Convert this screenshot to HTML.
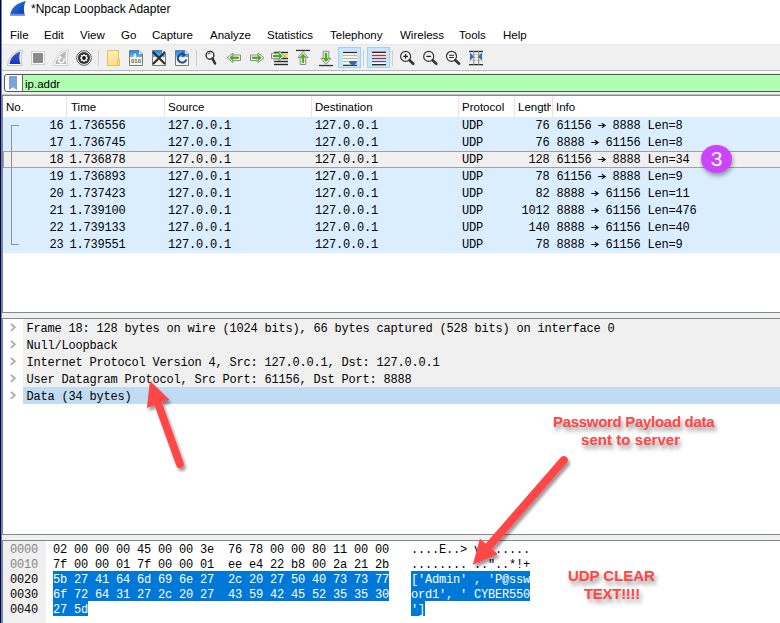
<!DOCTYPE html>
<html><head><meta charset="utf-8"><style>
*{margin:0;padding:0;box-sizing:border-box}
html,body{width:780px;height:623px;overflow:hidden;background:#fff}
body{position:relative;font-family:"Liberation Sans",sans-serif;font-size:12px;color:#000}
.a{position:absolute}
.ui{position:absolute;font-family:"Liberation Sans",sans-serif;font-size:11.5px;line-height:14px;white-space:pre}
.ti{font-size:12px}
.m{position:absolute;font-family:"Liberation Mono",monospace;font-size:12px;letter-spacing:-0.2px;line-height:17px;white-space:pre}
.mh{position:absolute;font-family:"Liberation Mono",monospace;font-size:12px;letter-spacing:-0.2px;line-height:15px;white-space:pre}
.ar{display:inline-block;width:7px;height:17px;vertical-align:top;letter-spacing:0}.ar svg{display:block;overflow:visible}
.note{position:absolute;font-family:"Liberation Sans",sans-serif;font-weight:bold;font-size:15px;letter-spacing:-0.3px;line-height:17px;color:#ff4646;white-space:pre;text-shadow:2px 4px 4px rgba(0,0,0,.42)}
</style></head><body>
<div class="a" style="left:0px;top:0px;width:1px;height:623px;background:#000;"></div>
<div class="a" style="left:1px;top:0px;width:1px;height:623px;background:#3d8ef2;"></div>
<svg class="a" style="left:0;top:0" width="30" height="20" viewBox="0 0 30 20"><defs><linearGradient id="tfin" x1="0" y1="0" x2="1" y2="1"><stop offset="0" stop-color="#2f7fee"/><stop offset="1" stop-color="#0636a8"/></linearGradient><linearGradient id="tfb" x1="0" y1="0" x2="0" y2="1"><stop offset="0" stop-color="#7aa8f0"/><stop offset="1" stop-color="#8090b0"/></linearGradient></defs><path d="M10 15.5 C11 8.5 16 3 25.8 1 C23.6 5 23.3 10 24.8 15.5 Z" fill="url(#tfin)"/><path d="M10.2 13.8 H24.6 L24.9 15.6 H10 Z" fill="url(#tfb)" opacity="0.85"/></svg>
<div class="ui ti" style="left:31px;top:2px">*Npcap Loopback Adapter</div>
<div class="ui" style="left:10px;top:28px;">File</div>
<div class="ui" style="left:44px;top:28px;">Edit</div>
<div class="ui" style="left:80px;top:28px;">View</div>
<div class="ui" style="left:121px;top:28px;">Go</div>
<div class="ui" style="left:152px;top:28px;">Capture</div>
<div class="ui" style="left:210px;top:28px;">Analyze</div>
<div class="ui" style="left:267px;top:28px;">Statistics</div>
<div class="ui" style="left:330px;top:28px;">Telephony</div>
<div class="ui" style="left:400px;top:28px;">Wireless</div>
<div class="ui" style="left:459px;top:28px;">Tools</div>
<div class="ui" style="left:503px;top:28px;">Help</div>
<div class="a" style="left:2px;top:44px;width:778px;height:1px;background:#e9e9e9;"></div>
<div class="a" style="left:2px;top:45px;width:778px;height:25px;background:#f0f0f0;"></div>
<div class="a" style="left:2px;top:70px;width:778px;height:1px;background:#b9b9b9;"></div>
<svg class="a" style="left:0;top:0" width="500" height="72" viewBox="0 0 500 72"><defs><linearGradient id="gfin" x1="0" y1="0" x2="0" y2="1"><stop offset="0" stop-color="#3a5ad8"/><stop offset="1" stop-color="#1c36b0"/></linearGradient><linearGradient id="gsky" x1="0" y1="0" x2="0" y2="1"><stop offset="0" stop-color="#1e8fe6"/><stop offset="1" stop-color="#5ab8f2"/></linearGradient><linearGradient id="gfold" x1="0" y1="0" x2="0" y2="1"><stop offset="0" stop-color="#fdedb5"/><stop offset="1" stop-color="#fbe08e"/></linearGradient></defs><path d="M7.5 65.5 C8.5 57 14 51 22.5 50 C21 55 21 60 22 65.5 Z" fill="#fff" stroke="#c4c4c4" stroke-width="1"/><path d="M9.5 64 C10.5 57.5 14.5 53 20.5 51.5 C19 55.5 19 59.5 20.5 64 Z" fill="url(#gfin)"/><rect x="31.5" y="51.5" width="13" height="13" fill="#fff" stroke="#cfcfcf"/><rect x="33" y="53" width="10" height="10" fill="#8a8a8a"/><path d="M53.5 65.5 C54.5 57 60 51 68.5 50 C67 55 67 60 68 65.5 Z" fill="#fff" stroke="#cfcfcf" stroke-width="1"/><path d="M55.5 64 C56.5 57.5 60.5 53 66.5 51.5 C65 55.5 65 59.5 66.5 64 Z" fill="#b8b8b8"/><path d="M63.6 58.6 A2.7 2.7 0 1 1 60.2 57.6" fill="none" stroke="#fff" stroke-width="1.6"/><path d="M59.2 55.6 L62.6 57.4 L59.6 59.6 Z" fill="#fff"/><circle cx="84" cy="58" r="7.3" fill="#fff" stroke="#5a5a5a" stroke-width="1"/><circle cx="84" cy="58" r="6.0" fill="#333"/><rect x="83.25" y="54.1" width="1.5" height="1.6" fill="#fff" transform="rotate(0 84 58)"/><rect x="83.25" y="54.1" width="1.5" height="1.6" fill="#fff" transform="rotate(45 84 58)"/><rect x="83.25" y="54.1" width="1.5" height="1.6" fill="#fff" transform="rotate(90 84 58)"/><rect x="83.25" y="54.1" width="1.5" height="1.6" fill="#fff" transform="rotate(135 84 58)"/><rect x="83.25" y="54.1" width="1.5" height="1.6" fill="#fff" transform="rotate(180 84 58)"/><rect x="83.25" y="54.1" width="1.5" height="1.6" fill="#fff" transform="rotate(225 84 58)"/><rect x="83.25" y="54.1" width="1.5" height="1.6" fill="#fff" transform="rotate(270 84 58)"/><rect x="83.25" y="54.1" width="1.5" height="1.6" fill="#fff" transform="rotate(315 84 58)"/><circle cx="84" cy="58" r="2.9" fill="#fff"/><circle cx="84" cy="58" r="1.9" fill="#111"/><rect x="98" y="50" width="1" height="16" fill="#cfcfcf"/><rect x="196" y="50" width="1" height="16" fill="#cfcfcf"/><rect x="363" y="50" width="1" height="16" fill="#cfcfcf"/><rect x="392" y="50" width="1" height="16" fill="#cfcfcf"/><path d="M107.5 50.5 H118.5 V59.5 H119.5 V65.5 H107.5 Z" fill="url(#gfold)" stroke="#e8c24e"/><path d="M117.5 59.5 H119.5 M117.5 59.5 V65.5" stroke="#e8c24e"/><path d="M129.5 50.5 H139 L142.5 54 V65.5 H129.5 Z" fill="#f6f4e0" stroke="#7a7a7a"/><path d="M130 51 H139 L142 54 V57 H130 Z" fill="url(#gsky)"/><path d="M139 51 V54 H142 Z" fill="#fff"/><path d="M133 57 C133.5 55 134.5 53.5 136 53 C135.5 54.5 135.5 56 136 57 Z" fill="#fff"/><text x="131" y="62.9" font-family="Liberation Sans" font-size="5.2" font-weight="bold" fill="#6a6a6a" textLength="10" lengthAdjust="spacingAndGlyphs">010</text><path d="M152.5 50.5 H162 L165.5 54 V65.5 H152.5 Z" fill="#f6f4e0" stroke="#7a7a7a"/><path d="M153 51 H162 L165 54 V57 H153 Z" fill="url(#gsky)"/><path d="M162 51 V54 H165 Z" fill="#fff"/><path d="M153.5 52.5 L164.5 63.5 M164.5 52.5 L153.5 63.5" stroke="#2b2b2b" stroke-width="2.1" stroke-linecap="round"/><path d="M175.5 50.5 H185 L188.5 54 V65.5 H175.5 Z" fill="#f6f4e0" stroke="#7a7a7a"/><path d="M176 51 H185 L188 54 V57 H176 Z" fill="url(#gsky)"/><path d="M185 51 V54 H188 Z" fill="#fff"/><path d="M186.3 59.5 A4.3 4.3 0 1 1 183.5 54.2" fill="none" stroke="#1d4a9c" stroke-width="2"/><path d="M182 51.5 L186.5 54.5 L182.5 57.5 Z" fill="#1d4a9c"/><circle cx="210" cy="55.3" r="3.9" fill="#f4f4f4" stroke="#333" stroke-width="1.4"/><path d="M208 54.5 A2.2 2.2 0 0 1 210.5 53" fill="none" stroke="#333" stroke-width="0.9"/><path d="M212.5 58.5 L215 63.5" stroke="#333" stroke-width="2.6" stroke-linecap="round"/><path d="M227 57.8 L233 53.0 L233 55.0 L240.5 55.0 L240.5 60.599999999999994 L233 60.599999999999994 L233 62.599999999999994 Z" fill="#fff" stroke="#8a8a8a" stroke-width="1" stroke-linejoin="round"/><path d="M229.6 57.8 L232.8 54.9 L232.8 56.9 L238.8 56.9 L238.8 58.699999999999996 L232.8 58.699999999999996 L232.8 60.699999999999996 Z" fill="#4aaa12" stroke="#4aaa12" stroke-width="0.7" stroke-linejoin="round"/><path d="M264 57.8 L258 53.0 L258 55.0 L250.5 55.0 L250.5 60.599999999999994 L258 60.599999999999994 L258 62.599999999999994 Z" fill="#fff" stroke="#8a8a8a" stroke-width="1" stroke-linejoin="round"/><path d="M261.4 57.8 L258.2 54.9 L258.2 56.9 L252.2 56.9 L252.2 58.699999999999996 L258.2 58.699999999999996 L258.2 60.699999999999996 Z" fill="#4aaa12" stroke="#4aaa12" stroke-width="0.7" stroke-linejoin="round"/><rect x="274" y="51.8" width="14" height="1.4" fill="#2a2a2a"/><rect x="274" y="57.8" width="14" height="1.4" fill="#2a2a2a"/><rect x="274" y="60.8" width="14" height="1.4" fill="#2a2a2a"/><rect x="274" y="63.8" width="14" height="1.4" fill="#2a2a2a"/><rect x="285" y="53.5" width="3" height="3.5" fill="#f8e030"/><path d="M285 56 L279 51.2 L279 53.2 L271.5 53.2 L271.5 58.8 L279 58.8 L279 60.8 Z" fill="#fff" stroke="#8a8a8a" stroke-width="1" stroke-linejoin="round"/><path d="M282.4 56 L279.2 53.1 L279.2 55.1 L273.2 55.1 L273.2 56.9 L279.2 56.9 L279.2 58.9 Z" fill="#4aaa12" stroke="#4aaa12" stroke-width="0.7" stroke-linejoin="round"/><rect x="296" y="49.8" width="14" height="1.3" fill="#333"/><path d="M303 51.5 L308 57.5 L305.8 57.5 L305.8 64.5 L300.2 64.5 L300.2 57.5 L298 57.5 Z" fill="#fff" stroke="#8a8a8a" stroke-width="1" stroke-linejoin="round"/><path d="M303 54.1 L305.9 57.3 L303.9 57.3 L303.9 62.8 L302.1 62.8 L302.1 57.3 L300.1 57.3 Z" fill="#4aaa12" stroke="#4aaa12" stroke-width="0.7" stroke-linejoin="round"/><rect x="319" y="64.9" width="14" height="1.3" fill="#333"/><path d="M326 64.3 L331 58.3 L328.8 58.3 L328.8 51.3 L323.2 51.3 L323.2 58.3 L321 58.3 Z" fill="#fff" stroke="#8a8a8a" stroke-width="1" stroke-linejoin="round"/><path d="M326 61.699999999999996 L328.9 58.5 L326.9 58.5 L326.9 53.0 L325.1 53.0 L325.1 58.5 L323.1 58.5 Z" fill="#4aaa12" stroke="#4aaa12" stroke-width="0.7" stroke-linejoin="round"/><rect x="338.5" y="47.5" width="22" height="20" fill="#cce4f7" stroke="#99d1ff"/><rect x="343" y="52" width="14" height="14" fill="#fbfbf5"/><rect x="343" y="51.9" width="14" height="1.2" fill="#2a2a2a"/><rect x="343" y="54.9" width="14" height="1.2" fill="#b8b6a8"/><rect x="343" y="57.9" width="14" height="1.2" fill="#b8b6a8"/><rect x="343" y="60.9" width="14" height="1.2" fill="#b8b6a8"/><rect x="343" y="64.7" width="14" height="1.2" fill="#2a2a2a"/><path d="M349 61 H357 C357 63.5 355 65 353 65 C351 65 349 63.5 349 61 Z" fill="#3565b5"/><rect x="367.5" y="47.5" width="22" height="20" fill="#cce4f7" stroke="#99d1ff"/><rect x="372" y="51.5" width="14" height="14" fill="#fcfcf6"/><rect x="372" y="51.599999999999994" width="14" height="1.4" fill="#2a2a2a"/><rect x="372" y="54.8" width="14" height="1.4" fill="#e02222"/><rect x="372" y="57.8" width="14" height="1.4" fill="#2a55a5"/><rect x="372" y="60.8" width="14" height="1.4" fill="#704a88"/><rect x="372" y="64.0" width="14" height="1.4" fill="#2a2a2a"/><circle cx="405.6" cy="56.4" r="5" fill="#f6f6f6" stroke="#333" stroke-width="1.2"/><path d="M409.5 60.3 L413.20000000000005 63.8" stroke="#333" stroke-width="2.6" stroke-linecap="round"/><path d="M403.2 56.4 H408 M405.6 54 V58.8" stroke="#222" stroke-width="1.3"/><circle cx="428.7" cy="56.4" r="5" fill="#f6f6f6" stroke="#333" stroke-width="1.2"/><path d="M432.59999999999997 60.3 L436.3 63.8" stroke="#333" stroke-width="2.6" stroke-linecap="round"/><path d="M426.3 56.4 H431.1" stroke="#222" stroke-width="1.3"/><circle cx="451.5" cy="56.3" r="5" fill="#f6f6f6" stroke="#333" stroke-width="1.2"/><path d="M455.4 60.199999999999996 L459.1 63.699999999999996" stroke="#333" stroke-width="2.6" stroke-linecap="round"/><path d="M449.1 55.2 H453.9 M449.1 57.5 H453.9" stroke="#222" stroke-width="1.1"/><rect x="469" y="54.0" width="14" height="1" fill="#cfcfc0"/><rect x="469" y="57.0" width="14" height="1" fill="#cfcfc0"/><rect x="469" y="60.0" width="14" height="1" fill="#cfcfc0"/><rect x="469" y="50.8" width="14" height="1.3" fill="#2a2a2a"/><rect x="469" y="64" width="14" height="1.3" fill="#2a2a2a"/><rect x="473.3" y="51" width="1" height="14" fill="#888"/><rect x="478.2" y="51" width="1" height="14" fill="#888"/><path d="M470 52.5 L474 56.8 L470 60.5 Z" fill="#3570c0"/><path d="M482 52.5 L478 56.8 L482 60.5 Z" fill="#3570c0"/></svg>
<div class="a" style="left:2px;top:71px;width:778px;height:24px;background:#f0f0f0;"></div>
<div class="a" style="left:2px;top:71px;width:778px;height:2px;background:#fbfbfb;"></div>
<div class="a" style="left:2px;top:94px;width:778px;height:1px;background:#c4c4c4;"></div>
<div class="a" style="left:2px;top:95px;width:778px;height:1px;background:#828790;"></div>
<div class="a" style="left:4px;top:74px;width:800px;height:18px;background:#fff;border:1px solid #555;border-radius:3px"></div>
<div class="a" style="left:22px;top:75px;width:780px;height:16px;background:#afffaf;border-left:1px solid #666"></div>
<div class="ui" style="left:25px;top:77px;">ip.addr</div>
<svg class="a" style="left:8px;top:75px" width="11" height="16" viewBox="0 0 11 16"><path d="M1 1 H9 V15 L5 12.3 L1 15 Z" fill="#7aa4d6"/></svg>
<div class="a" style="left:2px;top:96px;width:1px;height:217px;background:#828790;"></div>
<div class="a" style="left:3px;top:96px;width:777px;height:21px;background:#fff;"></div>
<div class="ui" style="left:6px;top:100px;">No.</div>
<div class="a" style="left:66px;top:96px;width:1px;height:21px;background:#e5e5e5;"></div>
<div class="ui" style="left:71px;top:100px;">Time</div>
<div class="a" style="left:164px;top:96px;width:1px;height:21px;background:#e5e5e5;"></div>
<div class="ui" style="left:168px;top:100px;">Source</div>
<div class="a" style="left:311px;top:96px;width:1px;height:21px;background:#e5e5e5;"></div>
<div class="ui" style="left:315px;top:100px;">Destination</div>
<div class="a" style="left:458px;top:96px;width:1px;height:21px;background:#e5e5e5;"></div>
<div class="ui" style="left:462px;top:100px;">Protocol</div>
<div class="a" style="left:514px;top:96px;width:1px;height:21px;background:#e5e5e5;"></div>
<div class="ui" style="left:518px;top:100px;width:33px;overflow:hidden">Length</div>
<div class="a" style="left:552px;top:96px;width:1px;height:21px;background:#e5e5e5;"></div>
<div class="ui" style="left:556px;top:100px;">Info</div>
<div class="a" style="left:3px;top:117px;width:777px;height:17px;background:#daeeff;"></div>
<div class="m" style="left:49.5px;top:118px;">16</div>
<div class="m" style="left:69.5px;top:118px;">1.736556</div>
<div class="m" style="left:168px;top:118px;">127.0.0.1</div>
<div class="m" style="left:315px;top:118px;">127.0.0.1</div>
<div class="m" style="left:462px;top:118px;">UDP</div>
<div class="m" style="left:535.5px;top:118px;">76</div>
<div class="m" style="left:556.5px;top:118px;">61156 <span class="ar"><svg width="7" height="17" viewBox="0 0 7 17"><path d="M-0.8 7.5 H6.2 M2.8 5.2 L6.2 7.5 L2.8 9.8" fill="none" stroke="#111" stroke-width="1.1"/></svg></span> 8888 Len=8</div>
<div class="a" style="left:3px;top:134px;width:777px;height:17px;background:#daeeff;"></div>
<div class="m" style="left:49.5px;top:135px;">17</div>
<div class="m" style="left:69.5px;top:135px;">1.736745</div>
<div class="m" style="left:168px;top:135px;">127.0.0.1</div>
<div class="m" style="left:315px;top:135px;">127.0.0.1</div>
<div class="m" style="left:462px;top:135px;">UDP</div>
<div class="m" style="left:535.5px;top:135px;">76</div>
<div class="m" style="left:556.5px;top:135px;">8888 <span class="ar"><svg width="7" height="17" viewBox="0 0 7 17"><path d="M-0.8 7.5 H6.2 M2.8 5.2 L6.2 7.5 L2.8 9.8" fill="none" stroke="#111" stroke-width="1.1"/></svg></span> 61156 Len=8</div>
<div class="a" style="left:3px;top:151px;width:777px;height:17px;background:#f0f0f0;border:1px solid #a0a0a0;border-right:0"></div>
<div class="m" style="left:49.5px;top:152px;">18</div>
<div class="m" style="left:69.5px;top:152px;">1.736878</div>
<div class="m" style="left:168px;top:152px;">127.0.0.1</div>
<div class="m" style="left:315px;top:152px;">127.0.0.1</div>
<div class="m" style="left:462px;top:152px;">UDP</div>
<div class="m" style="left:528.5px;top:152px;">128</div>
<div class="m" style="left:556.5px;top:152px;">61156 <span class="ar"><svg width="7" height="17" viewBox="0 0 7 17"><path d="M-0.8 7.5 H6.2 M2.8 5.2 L6.2 7.5 L2.8 9.8" fill="none" stroke="#111" stroke-width="1.1"/></svg></span> 8888 Len=34</div>
<div class="a" style="left:3px;top:168px;width:777px;height:17px;background:#daeeff;"></div>
<div class="m" style="left:49.5px;top:169px;">19</div>
<div class="m" style="left:69.5px;top:169px;">1.736893</div>
<div class="m" style="left:168px;top:169px;">127.0.0.1</div>
<div class="m" style="left:315px;top:169px;">127.0.0.1</div>
<div class="m" style="left:462px;top:169px;">UDP</div>
<div class="m" style="left:535.5px;top:169px;">78</div>
<div class="m" style="left:556.5px;top:169px;">61156 <span class="ar"><svg width="7" height="17" viewBox="0 0 7 17"><path d="M-0.8 7.5 H6.2 M2.8 5.2 L6.2 7.5 L2.8 9.8" fill="none" stroke="#111" stroke-width="1.1"/></svg></span> 8888 Len=9</div>
<div class="a" style="left:3px;top:185px;width:777px;height:17px;background:#daeeff;"></div>
<div class="m" style="left:49.5px;top:186px;">20</div>
<div class="m" style="left:69.5px;top:186px;">1.737423</div>
<div class="m" style="left:168px;top:186px;">127.0.0.1</div>
<div class="m" style="left:315px;top:186px;">127.0.0.1</div>
<div class="m" style="left:462px;top:186px;">UDP</div>
<div class="m" style="left:535.5px;top:186px;">82</div>
<div class="m" style="left:556.5px;top:186px;">8888 <span class="ar"><svg width="7" height="17" viewBox="0 0 7 17"><path d="M-0.8 7.5 H6.2 M2.8 5.2 L6.2 7.5 L2.8 9.8" fill="none" stroke="#111" stroke-width="1.1"/></svg></span> 61156 Len=11</div>
<div class="a" style="left:3px;top:202px;width:777px;height:17px;background:#daeeff;"></div>
<div class="m" style="left:49.5px;top:203px;">21</div>
<div class="m" style="left:69.5px;top:203px;">1.739100</div>
<div class="m" style="left:168px;top:203px;">127.0.0.1</div>
<div class="m" style="left:315px;top:203px;">127.0.0.1</div>
<div class="m" style="left:462px;top:203px;">UDP</div>
<div class="m" style="left:521.5px;top:203px;">1012</div>
<div class="m" style="left:556.5px;top:203px;">8888 <span class="ar"><svg width="7" height="17" viewBox="0 0 7 17"><path d="M-0.8 7.5 H6.2 M2.8 5.2 L6.2 7.5 L2.8 9.8" fill="none" stroke="#111" stroke-width="1.1"/></svg></span> 61156 Len=476</div>
<div class="a" style="left:3px;top:219px;width:777px;height:17px;background:#daeeff;"></div>
<div class="m" style="left:49.5px;top:220px;">22</div>
<div class="m" style="left:69.5px;top:220px;">1.739133</div>
<div class="m" style="left:168px;top:220px;">127.0.0.1</div>
<div class="m" style="left:315px;top:220px;">127.0.0.1</div>
<div class="m" style="left:462px;top:220px;">UDP</div>
<div class="m" style="left:528.5px;top:220px;">140</div>
<div class="m" style="left:556.5px;top:220px;">8888 <span class="ar"><svg width="7" height="17" viewBox="0 0 7 17"><path d="M-0.8 7.5 H6.2 M2.8 5.2 L6.2 7.5 L2.8 9.8" fill="none" stroke="#111" stroke-width="1.1"/></svg></span> 61156 Len=40</div>
<div class="a" style="left:3px;top:236px;width:777px;height:17px;background:#daeeff;"></div>
<div class="m" style="left:49.5px;top:237px;">23</div>
<div class="m" style="left:69.5px;top:237px;">1.739551</div>
<div class="m" style="left:168px;top:237px;">127.0.0.1</div>
<div class="m" style="left:315px;top:237px;">127.0.0.1</div>
<div class="m" style="left:462px;top:237px;">UDP</div>
<div class="m" style="left:535.5px;top:237px;">78</div>
<div class="m" style="left:556.5px;top:237px;">8888 <span class="ar"><svg width="7" height="17" viewBox="0 0 7 17"><path d="M-0.8 7.5 H6.2 M2.8 5.2 L6.2 7.5 L2.8 9.8" fill="none" stroke="#111" stroke-width="1.1"/></svg></span> 61156 Len=9</div>
<div class="a" style="left:11px;top:125px;width:1px;height:120px;background:#8c9196;"></div>
<div class="a" style="left:11px;top:125px;width:8px;height:1px;background:#8c9196;"></div>
<div class="a" style="left:11px;top:244px;width:8px;height:1px;background:#8c9196;"></div>
<div class="a" style="left:2px;top:312px;width:778px;height:1px;background:#828790;"></div>
<div class="a" style="left:2px;top:313px;width:778px;height:5px;background:#f0f0f0;"></div>
<div class="a" style="left:2px;top:318px;width:778px;height:1px;background:#828790;"></div>
<div class="a" style="left:2px;top:319px;width:1px;height:215px;background:#828790;"></div>
<div class="a" style="left:23px;top:319px;width:757px;height:17px;background:#f0f0f0;"></div>
<div class="m" style="left:26.5px;top:321px;">Frame 18: 128 bytes on wire (1024 bits), 66 bytes captured (528 bits) on interface 0</div>
<svg class="a" style="left:9px;top:323px" width="8" height="10" viewBox="0 0 8 10"><path d="M1.9 0.8 L5.9 4.3 L1.9 7.9" fill="none" stroke="#a6a6a6" stroke-width="1.6"/></svg>
<div class="a" style="left:23px;top:336px;width:757px;height:17px;background:#f0f0f0;"></div>
<div class="m" style="left:26.5px;top:338px;">Null/Loopback</div>
<svg class="a" style="left:9px;top:340px" width="8" height="10" viewBox="0 0 8 10"><path d="M1.9 0.8 L5.9 4.3 L1.9 7.9" fill="none" stroke="#a6a6a6" stroke-width="1.6"/></svg>
<div class="a" style="left:23px;top:353px;width:757px;height:17px;background:#f0f0f0;"></div>
<div class="m" style="left:26.5px;top:355px;">Internet Protocol Version 4, Src: 127.0.0.1, Dst: 127.0.0.1</div>
<svg class="a" style="left:9px;top:357px" width="8" height="10" viewBox="0 0 8 10"><path d="M1.9 0.8 L5.9 4.3 L1.9 7.9" fill="none" stroke="#a6a6a6" stroke-width="1.6"/></svg>
<div class="a" style="left:23px;top:370px;width:757px;height:17px;background:#f0f0f0;"></div>
<div class="m" style="left:26.5px;top:372px;">User Datagram Protocol, Src Port: 61156, Dst Port: 8888</div>
<svg class="a" style="left:9px;top:374px" width="8" height="10" viewBox="0 0 8 10"><path d="M1.9 0.8 L5.9 4.3 L1.9 7.9" fill="none" stroke="#a6a6a6" stroke-width="1.6"/></svg>
<div class="a" style="left:23px;top:387px;width:757px;height:17px;background:#c0dcf3;"></div>
<div class="m" style="left:26.5px;top:389px;">Data (34 bytes)</div>
<svg class="a" style="left:9px;top:391px" width="8" height="10" viewBox="0 0 8 10"><path d="M1.9 0.8 L5.9 4.3 L1.9 7.9" fill="none" stroke="#a6a6a6" stroke-width="1.6"/></svg>
<div class="a" style="left:2px;top:534px;width:778px;height:1px;background:#828790;"></div>
<div class="a" style="left:2px;top:535px;width:778px;height:5px;background:#f0f0f0;"></div>
<div class="a" style="left:2px;top:540px;width:778px;height:1px;background:#828790;"></div>
<div class="a" style="left:2px;top:541px;width:1px;height:82px;background:#828790;"></div>
<div class="a" style="left:3px;top:541px;width:43px;height:82px;background:#f0f0f0;"></div>
<div class="mh" style="left:10px;top:543px;color:#858585">0000</div>
<div class="mh" style="left:53px;top:543px;">02 00 00 00 45 00 00 3e  76 78 00 00 80 11 00 00</div>
<div class="mh" style="left:411px;top:543px;">....E..&gt; vx......</div>
<div class="mh" style="left:10px;top:558px;color:#858585">0010</div>
<div class="mh" style="left:53px;top:558px;">7f 00 00 01 7f 00 00 01  ee e4 22 b8 00 2a 21 2b</div>
<div class="mh" style="left:411px;top:558px;">........ ..&quot;..*!+</div>
<div class="mh" style="left:10px;top:573px;color:#000">0020</div>
<div class="a" style="left:53px;top:571px;width:336.0px;height:15px;background:#0078d7;"></div>
<div class="a" style="left:411px;top:571px;width:119.0px;height:15px;background:#0078d7;"></div>
<div class="mh" style="left:53px;top:573px;color:#fff">5b 27 41 64 6d 69 6e 27  2c 20 27 50 40 73 73 77</div>
<div class="mh" style="left:411px;top:573px;color:#fff">[&#x27;Admin&#x27; , &#x27;P@ssw</div>
<div class="mh" style="left:10px;top:588px;color:#000">0030</div>
<div class="a" style="left:53px;top:586px;width:336.0px;height:15px;background:#0078d7;"></div>
<div class="a" style="left:411px;top:586px;width:119.0px;height:15px;background:#0078d7;"></div>
<div class="mh" style="left:53px;top:588px;color:#fff">6f 72 64 31 27 2c 20 27  43 59 42 45 52 35 35 30</div>
<div class="mh" style="left:411px;top:588px;color:#fff">ord1&#x27;, &#x27; CYBER550</div>
<div class="mh" style="left:10px;top:603px;color:#000">0040</div>
<div class="a" style="left:53px;top:601px;width:35.0px;height:15px;background:#0078d7;"></div>
<div class="a" style="left:411px;top:601px;width:14.0px;height:15px;background:#0078d7;"></div>
<div class="mh" style="left:53px;top:603px;color:#fff">27 5d</div>
<div class="mh" style="left:411px;top:603px;color:#fff">&#x27;]</div>
<div class="note" style="left:553px;top:413px">Password Payload data</div>
<div class="note" style="left:581px;top:431px;letter-spacing:0.05px">sent to server</div>
<div class="note" style="left:568px;top:567px;letter-spacing:-0.05px">UDP CLEAR</div>
<div class="note" style="left:584px;top:585px">TEXT!!!!</div>
<div class="a" style="left:701px;top:145px;width:31px;height:28px;border-radius:50%;background:#cc44fc;box-shadow:1px 3px 4px rgba(0,0,0,.35)"></div>
<div class="a" style="left:701px;top:145px;width:31px;height:28px;line-height:28px;text-align:center;color:#fff;font-size:21px;font-family:'Liberation Sans',sans-serif">3</div>
<svg class="a" style="left:0;top:0" width="780" height="623"><defs><filter id="sh" x="-20%" y="-20%" width="140%" height="140%"><feGaussianBlur in="SourceAlpha" stdDeviation="1.5"/><feOffset dx="2" dy="3"/><feComponentTransfer><feFuncA type="linear" slope="0.4"/></feComponentTransfer><feMerge><feMergeNode/><feMergeNode in="SourceGraphic"/></feMerge></filter></defs><g filter="url(#sh)"><line x1="179.9" y1="464.1" x2="155.7" y2="396.9" stroke="#ff4646" stroke-width="7.8" stroke-linecap="round"/><polygon points="150.3,381.8 168.7,399.6 147.5,407.3" fill="#ff4646" stroke="#ff4646" stroke-width="1" stroke-linejoin="round"/><line x1="563.8" y1="460.1" x2="484.1" y2="551.8" stroke="#ff4646" stroke-width="8.3" stroke-linecap="round"/><polygon points="473.5,564.0 480.2,539.3 497.0,554.0" fill="#ff4646" stroke="#ff4646" stroke-width="1" stroke-linejoin="round"/></g></svg>
</body></html>
